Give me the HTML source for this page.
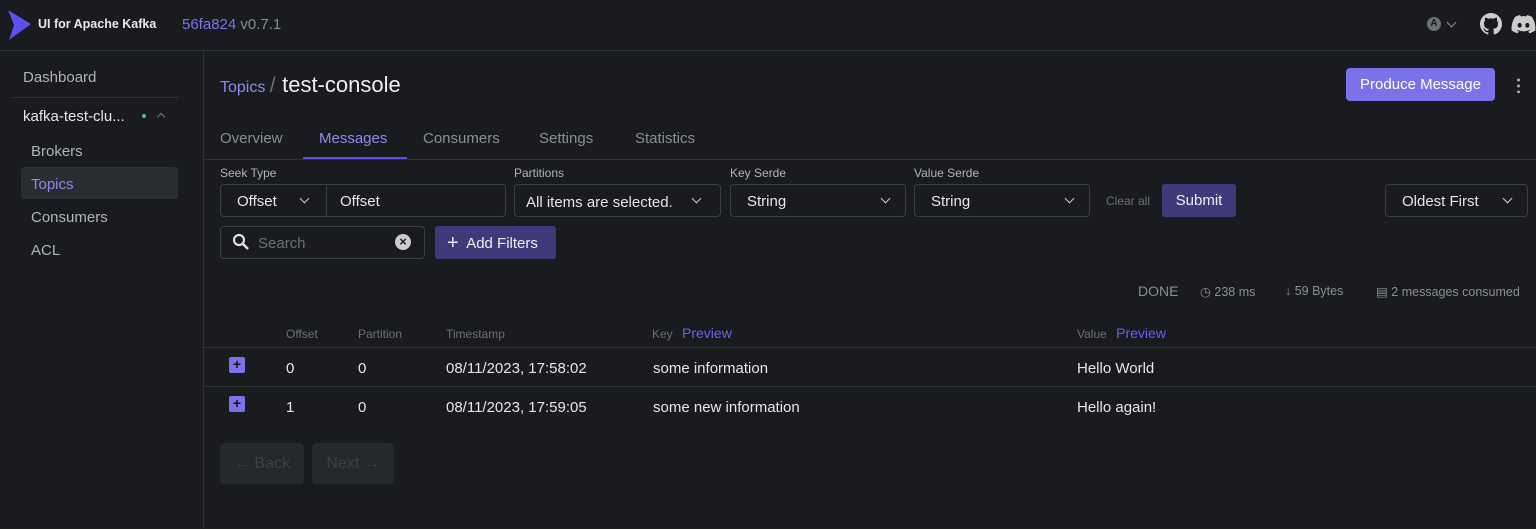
<!DOCTYPE html>
<html><head><style>
*{box-sizing:border-box;margin:0;padding:0}
body{width:1536px;height:529px;background:#1a1b1f;font-family:"Liberation Sans",sans-serif;color:#e6e6e8;position:relative;overflow:hidden}
.a{position:absolute;white-space:nowrap}
.box{position:absolute;border:1px solid #3a3d44;border-radius:4px}
.chev{position:absolute;width:7px;height:7px;border-right:1.6px solid #ccc;border-bottom:1.6px solid #ccc;transform:rotate(45deg)}
.g{color:#8a8d94}
.hd{font-size:12px;color:#6c6f76}
.pl{background:#7b72e9;width:16px;height:16px;border-radius:2px;color:#111;font-weight:bold;font-size:14px;line-height:15px;text-align:center}
</style></head><body>
<div class="a" style="left:0;top:50px;width:1536px;height:1px;background:#2e3135"></div>
<div class="a" style="left:203px;top:51px;width:1px;height:478px;background:#2e3135"></div>
<svg class="a" style="left:6px;top:9px" width="26" height="32" viewBox="0 0 26 32"><path d="M2 1 L25 15 L3 31 L8 16 Z" fill="#5b4ff0"/></svg>
<div class="a" style="left:38px;top:17px;font-size:12.5px;font-weight:bold;color:#e8e8ea">UI for Apache Kafka</div>
<div class="a" style="left:182px;top:16px;font-size:15px;color:#7b72e9">56fa824 <span class="g">v0.7.1</span></div>
<div class="a" style="left:1427px;top:17px;width:14px;height:14px;border-radius:50%;background:#6c6f76;color:#1a1b1f;font-size:10px;font-weight:bold;text-align:center;line-height:14px">A</div>
<div class="chev" style="left:1448px;top:19px;border-color:#8a8d94"></div>
<svg class="a" style="left:1480px;top:13px" width="22" height="22" viewBox="0 0 16 16"><path fill="#ccc" d="M8 0C3.58 0 0 3.580 0 8c0 3.54 2.29 6.53 5.470 7.59.4.07.55-.17.55-.38v-1.33c-2.23.48-2.7-1.07-2.7-1.07-.36-.92-.89-1.170-.89-1.17-.73-.5.05-.49.05-.49.8.06 1.23.83 1.23.83.71 1.22 1.87.87 2.33.66.07-.52.28-.87.5-1.07-1.78-.2-3.64-.89-3.64-3.95 0-.87.31-1.59.82-2.15-.08-.2-.36-1.02.08-2.12 0 0 .67-.21 2.2.82a7.6 7.6 0 014 0c1.53-1.04 2.2-.82 2.2-.82.44 1.1.16 1.92.08 2.12.51.56.82 1.27.82 2.15 0 3.07-1.87 3.75-3.65 3.95.29.25.54.73.54 1.48v2.2c0 .21.15.46.55.38A8 8 0 0016 8c0-4.42-3.58-8-8-8z"/></svg>
<svg class="a" style="left:1511px;top:15px" width="25" height="19" viewBox="0 0 24 18"><path fill="#ccc" d="M20 1.5A19 19 0 0015.4 0l-.6 1.2a18 18 0 00-5.6 0L8.6 0A19 19 0 004 1.5C1 6 .3 10.3.6 14.6A19 19 0 006.3 17.5l1.2-2a12 12 0 01-1.9-.9l.5-.4a13.6 13.6 0 0011.8 0l.5.4a12 12 0 01-1.9.9l1.2 2a19 19 0 005.7-2.9c.4-5-.8-9.3-3.4-13.1zM8.3 12c-1.1 0-2-1-2-2.3s.9-2.3 2-2.3 2 1 2 2.3-.9 2.3-2 2.3zm7.4 0c-1.1 0-2-1-2-2.3s.9-2.3 2-2.3 2 1 2 2.3-.9 2.3-2 2.3z"/></svg>
<!-- sidebar -->
<div class="a" style="left:23px;top:69px;font-size:15px;color:#b0b3b8">Dashboard</div>
<div class="a" style="left:12px;top:97px;width:166px;height:1px;background:#2e3135"></div>
<div class="a" style="left:23px;top:108px;font-size:15px;color:#e6e6e8">kafka-test-clu...</div>
<div class="a" style="left:142px;top:114px;width:4px;height:4px;border-radius:50%;background:#4cc66a"></div>
<div class="a" style="left:158px;top:114px;width:6px;height:6px;border-left:1.3px solid #777;border-top:1.3px solid #777;transform:rotate(45deg)"></div>
<div class="a" style="left:31px;top:143px;font-size:15px;color:#b0b3b8">Brokers</div>
<div class="a" style="left:21px;top:167px;width:157px;height:32px;background:#2a2d31;border-radius:3px"></div>
<div class="a" style="left:31px;top:176px;font-size:15px;color:#8f89ee">Topics</div>
<div class="a" style="left:31px;top:209px;font-size:15px;color:#b0b3b8">Consumers</div>
<div class="a" style="left:31px;top:242px;font-size:15px;color:#b0b3b8">ACL</div>
<!-- main -->
<div class="a" style="left:220px;top:72px;font-size:16px;color:#8f89ee">Topics <span style="color:#6c6f76;font-size:21px">/</span> <span style="color:#eee;font-size:22px;margin-left:2px">test-console</span></div>
<div class="a" style="left:1346px;top:68px;width:149px;height:33px;background:#7b72e9;border-radius:4px;font-size:15px;color:#fff;text-align:center;line-height:34px">Produce Message</div>
<div class="a" style="left:1517px;top:77px;width:3px;height:16px;background:radial-gradient(circle,#aaa 1.4px,transparent 1.6px) 0 0/3px 6px"></div>
<div class="a" style="left:220px;top:130px;font-size:15px;color:#8a8d94">Overview</div>
<div class="a" style="left:319px;top:130px;font-size:15px;color:#8f89ee">Messages</div>
<div class="a" style="left:303px;top:157px;width:104px;height:2px;background:#5b4ff0"></div>
<div class="a" style="left:423px;top:130px;font-size:15px;color:#8a8d94">Consumers</div>
<div class="a" style="left:539px;top:130px;font-size:15px;color:#8a8d94">Settings</div>
<div class="a" style="left:635px;top:130px;font-size:15px;color:#8a8d94">Statistics</div>
<div class="a" style="left:204px;top:159px;width:1332px;height:1px;background:#2e3135"></div>
<div class="a" style="left:220px;top:166px;font-size:12px;color:#b0b3b8">Seek Type</div>
<div class="a" style="left:514px;top:166px;font-size:12px;color:#b0b3b8">Partitions</div>
<div class="a" style="left:730px;top:166px;font-size:12px;color:#b0b3b8">Key Serde</div>
<div class="a" style="left:914px;top:166px;font-size:12px;color:#b0b3b8">Value Serde</div>
<div class="box" style="left:220px;top:184px;width:286px;height:33px"></div>
<div class="a" style="left:326px;top:185px;width:1px;height:31px;background:#3a3d44"></div>
<div class="a" style="left:237px;top:193px;font-size:15px">Offset</div><div class="chev" style="left:301px;top:195px"></div>
<div class="a" style="left:340px;top:193px;font-size:15px">Offset</div>
<div class="box" style="left:514px;top:184px;width:207px;height:33px"></div>
<div class="a" style="left:526px;top:194px;font-size:15px">All items are selected.</div><div class="chev" style="left:693px;top:195px"></div>
<div class="box" style="left:730px;top:184px;width:176px;height:33px"></div>
<div class="a" style="left:747px;top:193px;font-size:15px">String</div><div class="chev" style="left:882px;top:195px"></div>
<div class="box" style="left:914px;top:184px;width:176px;height:33px"></div>
<div class="a" style="left:931px;top:193px;font-size:15px">String</div><div class="chev" style="left:1066px;top:195px"></div>
<div class="a" style="left:1106px;top:194px;font-size:12px;color:#6c6f76">Clear all</div>
<div class="a" style="left:1162px;top:184px;width:74px;height:33px;background:#3f3b7a;border-radius:3px;font-size:15px;color:#eee;text-align:center;line-height:34px">Submit</div>
<div class="box" style="left:1385px;top:184px;width:143px;height:33px"></div>
<div class="a" style="left:1402px;top:193px;font-size:15px">Oldest First</div><div class="chev" style="left:1504px;top:195px"></div>
<div class="box" style="left:220px;top:226px;width:205px;height:33px"></div>
<svg class="a" style="left:232px;top:233px" width="18" height="18" viewBox="0 0 18 18"><circle cx="7" cy="7" r="5" stroke="#ddd" stroke-width="2.2" fill="none"/><path d="M11 11l5 5" stroke="#ddd" stroke-width="2.6"/></svg>
<div class="a" style="left:258px;top:235px;font-size:15px;color:#6c6f76">Search</div>
<div class="a" style="left:395px;top:234px;width:16px;height:16px;border-radius:50%;background:#ccc;color:#1a1b1f;font-size:13px;font-weight:bold;text-align:center;line-height:16px">×</div>
<div class="a" style="left:435px;top:226px;width:121px;height:33px;background:#3f3b7a;border-radius:3px;font-size:15px;color:#eee;line-height:34px;padding-left:12px"><span style="font-size:20px;vertical-align:-1px">+</span>&nbsp; Add Filters</div>
<div class="a" style="left:1138px;top:283px;font-size:14px;color:#8a8d94">DONE</div>
<div class="a" style="left:1200px;top:284px;font-size:12.5px;color:#8a8d94">◷ 238 ms</div>
<div class="a" style="left:1285px;top:284px;font-size:12.5px;color:#8a8d94">↓ 59 Bytes</div>
<div class="a" style="left:1376px;top:284px;font-size:12.5px;color:#8a8d94">▤ 2 messages consumed</div>
<div class="a hd" style="left:286px;top:327px">Offset</div>
<div class="a hd" style="left:358px;top:327px">Partition</div>
<div class="a hd" style="left:446px;top:327px">Timestamp</div>
<div class="a hd" style="left:652px;top:325px">Key <span style="color:#6a5ff2;font-size:14px;margin-left:6px">Preview</span></div>
<div class="a hd" style="left:1077px;top:325px">Value <span style="color:#6a5ff2;font-size:14px;margin-left:6px">Preview</span></div>
<div class="a" style="left:204px;top:347px;width:1332px;height:1px;background:#2e3135"></div>
<div class="a" style="left:204px;top:386px;width:1332px;height:1px;background:#2e3135"></div>
<div class="a pl" style="left:229px;top:357px">+</div>
<div class="a pl" style="left:229px;top:396px">+</div>
<div class="a" style="left:286px;top:360px;font-size:15px">0</div>
<div class="a" style="left:358px;top:360px;font-size:15px">0</div>
<div class="a" style="left:446px;top:360px;font-size:15px">08/11/2023, 17:58:02</div>
<div class="a" style="left:653px;top:360px;font-size:15px">some information</div>
<div class="a" style="left:1077px;top:360px;font-size:15px">Hello World</div>
<div class="a" style="left:286px;top:399px;font-size:15px">1</div>
<div class="a" style="left:358px;top:399px;font-size:15px">0</div>
<div class="a" style="left:446px;top:399px;font-size:15px">08/11/2023, 17:59:05</div>
<div class="a" style="left:653px;top:399px;font-size:15px">some new information</div>
<div class="a" style="left:1077px;top:399px;font-size:15px">Hello again!</div>
<div class="a" style="left:220px;top:443px;width:84px;height:41px;background:#25282c;border-radius:4px;font-size:16px;color:#3d4046;text-align:center;line-height:41px">← Back</div>
<div class="a" style="left:312px;top:443px;width:82px;height:41px;background:#25282c;border-radius:4px;font-size:16px;color:#3d4046;text-align:center;line-height:41px">Next →</div>
</body></html>
